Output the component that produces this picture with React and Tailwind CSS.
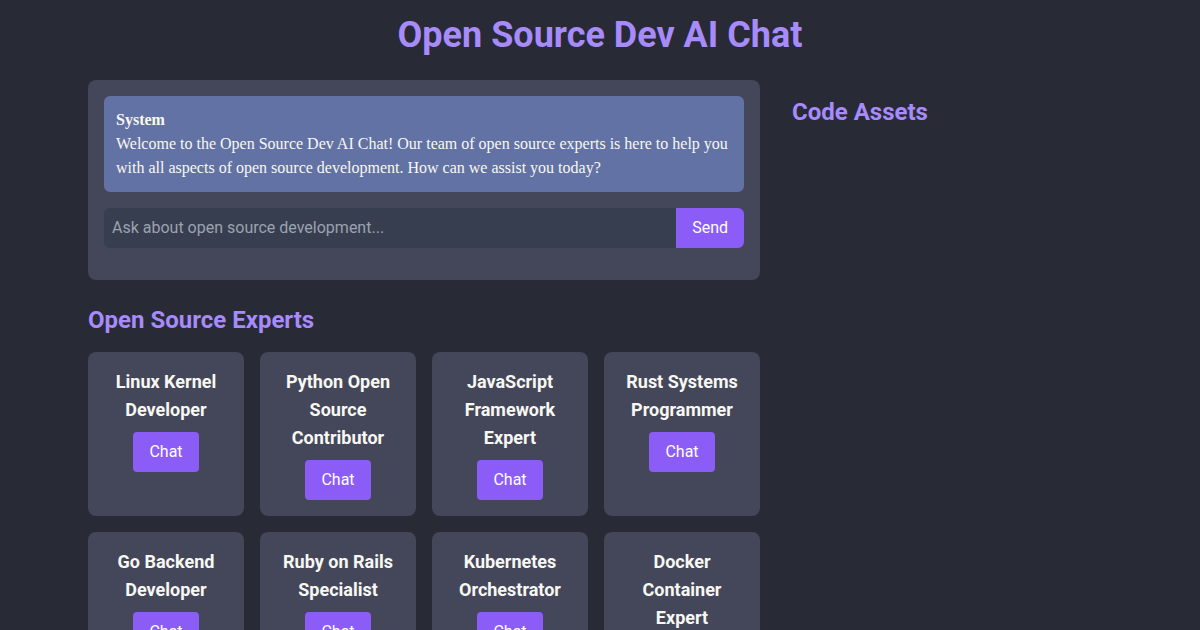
const experts = [
  'Linux Kernel Developer',
  'Python Open Source Contributor',
  'JavaScript Framework Expert',
  'Rust Systems Programmer',
  'Go Backend Developer',
  'Ruby on Rails Specialist',
  'Kubernetes Orchestrator',
  'Docker Container Expert',
];

const App = () => {
  return (
    <div className="min-h-screen bg-[#282a36] text-[#f8f8f2] font-['Roboto',sans-serif] pt-[15px] pb-10">
      <h1 className="text-center text-4xl font-bold text-[#a78bfa] leading-10">
        Open Source Dev AI Chat
      </h1>

      <div className="max-w-[1024px] mx-auto mt-[25px] flex gap-8">
        <div className="flex-1 min-w-0">
          <div className="bg-[#44475a] rounded-lg p-4 pb-8">
            <div className="bg-[#6272a4] rounded-md p-3 mb-4 font-['Liberation_Serif',serif] text-base leading-6 text-[#f8f8f2]">
              <div className="font-bold">System</div>
              <p>
                Welcome to the Open Source Dev AI Chat! Our team of open source experts is here to help you
                with all aspects of open source development. How can we assist you today?
              </p>
            </div>
            <div className="flex h-10">
              <input
                type="text"
                placeholder="Ask about open source development..."
                className="flex-1 bg-[#373e4f] rounded-l-md px-2 text-base text-[#f8f8f2] placeholder:text-[#9ca3af] outline-none"
              />
              <button className="bg-[#8b5cf6] text-white px-4 rounded-r-md text-base">
                Send
              </button>
            </div>
          </div>

          <h2 className="mt-6 text-2xl font-bold text-[#a78bfa] leading-8">
            Open Source Experts
          </h2>
          <div className="mt-4 grid grid-cols-4 gap-4">
            {experts.map((name) => (
              <div key={name} className="bg-[#44475a] rounded-lg p-4 flex flex-col items-center text-center">
                <h3 className="text-lg font-bold leading-7 text-[#f8f8f2]">{name}</h3>
                <button className="mt-2 bg-[#8b5cf6] text-white px-4 py-2 rounded text-base leading-6">
                  Chat
                </button>
              </div>
            ))}
          </div>
        </div>

        <div className="w-80 shrink-0">
          <h2 className="mt-4 text-2xl font-bold text-[#a78bfa] leading-8">Code Assets</h2>
        </div>
      </div>
    </div>
  );
};

export default App;
